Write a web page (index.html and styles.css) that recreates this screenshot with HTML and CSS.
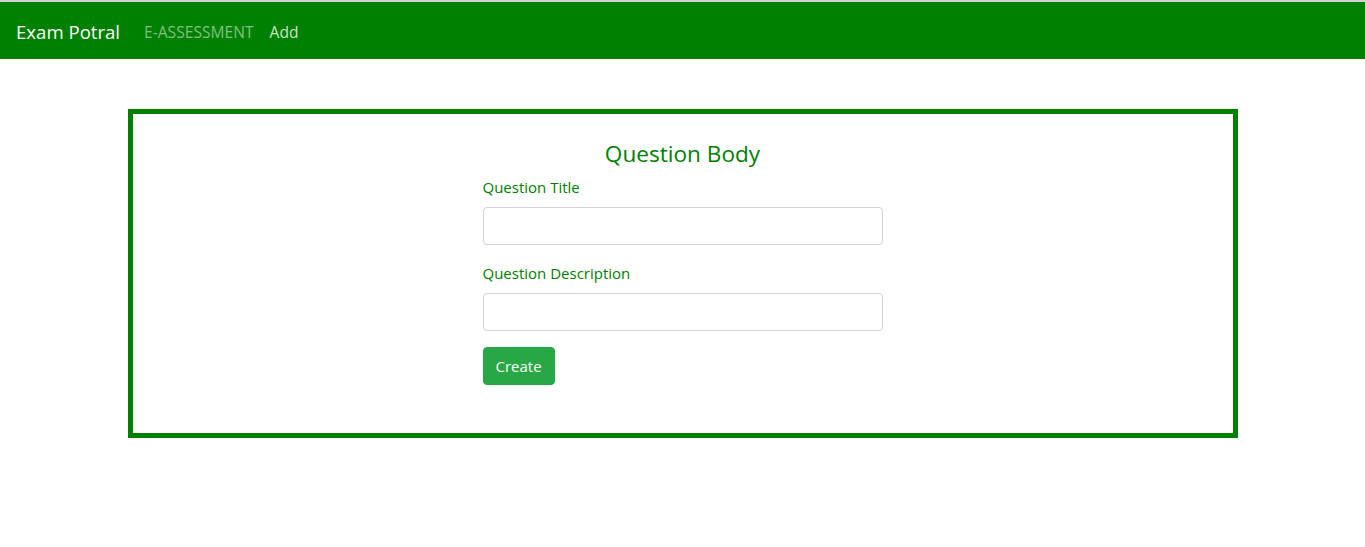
FILE: index.html
```html
<!DOCTYPE html>
<html lang="en">
<head>
<meta charset="utf-8">
<title>Exam Potral</title>
<link rel="stylesheet" href="styles.css">
</head>
<body>
<nav class="navbar">
  <a class="brand" href="#">Exam Potral</a>
  <ul class="nav">
    <li><a class="nav-link muted" href="#">E-ASSESSMENT</a></li>
    <li><a class="nav-link" href="#">Add</a></li>
  </ul>
</nav>
<main class="container">
  <section class="panel">
    <form class="form">
      <h4 class="heading">Question Body</h4>
      <div class="group">
        <label class="label" for="qt">Question Title</label>
        <input class="control" id="qt" type="text">
      </div>
      <div class="group">
        <label class="label" for="qd">Question Description</label>
        <input class="control" id="qd" type="text">
      </div>
      <button class="btn" type="button">Create</button>
    </form>
  </section>
</main>
</body>
</html>
```
FILE: styles.css
```css
* { box-sizing: border-box; }
html, body {
  margin: 0;
  padding: 0;
  background: #fff;
  font-family: "Open Sans", "Noto Sans", sans-serif;
  font-size: 15px;
  line-height: 1.5;
  color: #212529;
}
.navbar {
  display: flex;
  align-items: center;
  background: #008000;
  border-top: 2px solid #d2d2d2;
  padding: 9px 16px 7px;
  height: 59px;
}
.brand {
  color: #fff;
  font-size: 18.6px;
  line-height: 30px;
  text-decoration: none;
  margin-right: 16px;
}
.nav {
  display: flex;
  list-style: none;
  margin: 0;
  padding: 0;
}
.nav-link {
  display: block;
  padding: 8px;
  color: rgba(255, 255, 255, 0.8);
  text-decoration: none;
  font-size: 15.6px;
  line-height: 24px;
}
.nav-link.muted { color: rgba(255, 255, 255, 0.5); }
.container {
  width: 1110px;
  margin: 50px auto 0;
}
.panel {
  border: 5px solid #008000;
  padding: 25px 0 48px;
}
.form {
  width: 400px;
  margin: 0 auto;
}
.heading {
  margin: 0 0 7px;
  text-align: center;
  color: #008000;
  font-size: 22.6px;
  font-weight: 400;
  line-height: 29px;
}
.group { margin-bottom: 16px; }
.label {
  display: block;
  color: #008000;
  margin-bottom: 8px;
  line-height: 24px;
}
.control {
  display: block;
  width: 100%;
  height: 38px;
  border: 1px solid #ced4da;
  border-radius: 4px;
  padding: 6px 12px;
  font: inherit;
}
.btn {
  display: inline-block;
  height: 38px;
  padding: 6px 12px;
  background: #28a745;
  border: 1px solid #28a745;
  border-radius: 4px;
  color: #fff;
  font: inherit;
  line-height: 24px;
}
```
